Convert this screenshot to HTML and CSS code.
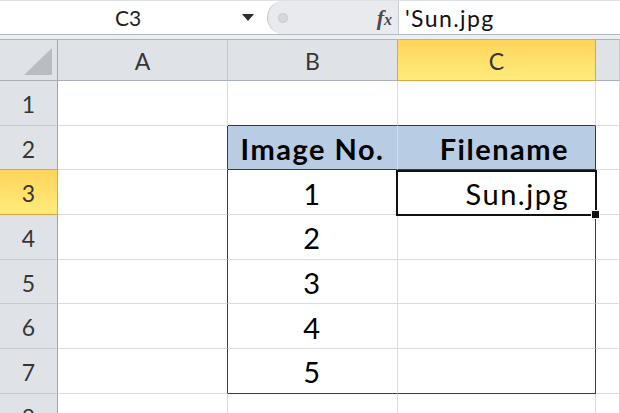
FILE: index.html
```html
<!doctype html>
<html>
<head>
<meta charset="utf-8">
<title>Sheet</title>
<link rel="stylesheet" href="styles.css">
</head>
<body>
<div class="fbar">
	<div class="namebox"><span class="ref">C3</span><span class="arrow"></span></div>
	<div class="fxzone"><span class="knob"></span><span class="fx">f<small>x</small></span></div>
	<div class="formula">'Sun.jpg</div>
</div>
<div class="gap"></div>
<div class="sheet">
	<div class="c hd corner"><svg width="30" height="29" viewBox="0 0 30 29"><polygon points="1,28 29,1 29,28" fill="#b8bdc3"/></svg></div>
	<div class="c hd">A</div>
	<div class="c hd selleft">B</div>
	<div class="c hd sel">C</div>
	<div class="c hd"></div>

	<div class="c rh">1</div>
	<div class="c"></div>
	<div class="c bb"></div>
	<div class="c bb"></div>
	<div class="c"></div>

	<div class="c rh seltop">2</div>
	<div class="c br"></div>
	<div class="c th bb">Image No.</div>
	<div class="c th bb br right">Filename</div>
	<div class="c"></div>

	<div class="c rh sel">3</div>
	<div class="c br"></div>
	<div class="c">1</div>
	<div class="c br right cur">Sun.jpg</div>
	<div class="c"></div>

	<div class="c rh">4</div>
	<div class="c br"></div>
	<div class="c">2</div>
	<div class="c br"></div>
	<div class="c"></div>

	<div class="c rh">5</div>
	<div class="c br"></div>
	<div class="c">3</div>
	<div class="c br"></div>
	<div class="c"></div>

	<div class="c rh">6</div>
	<div class="c br"></div>
	<div class="c">4</div>
	<div class="c br"></div>
	<div class="c"></div>

	<div class="c rh">7</div>
	<div class="c br"></div>
	<div class="c bb">5</div>
	<div class="c bb br"></div>
	<div class="c"></div>

	<div class="c rh">8</div>
	<div class="c"></div>
	<div class="c"></div>
	<div class="c"></div>
	<div class="c"></div>
</div>
</body>
</html>
```
FILE: styles.css
```css
*{ margin:0; padding:0; box-sizing:border-box;}
body{ width:620px; height:413px; overflow:hidden; background:#fff; font-family:Lato,"Open Sans",sans-serif;}

.fbar{ display:flex; height:35px; border-top:1px solid #dde0e4; border-bottom:1px solid #b4bac2; background:#fff;}
.namebox{ width:267px; display:flex; align-items:center;}
.namebox .ref{ flex:1; text-align:center; font-size:21px; color:#1e1e1e; padding-left:14px;}
.arrow{ width:0; height:0; border-left:6px solid transparent; border-right:6px solid transparent; border-top:7px solid #2d2d2d; margin-right:13px;}
.fxzone{ width:132px; background:#e8eaed; border-left:1px solid #bfc3c8; border-right:1px solid #c6c9cd; border-radius:18px 0 0 18px; display:flex; align-items:center; justify-content:space-between; padding:0 6px 0 10px;}
.knob{ width:10px; height:10px; border-radius:50%; background:#d6d8db; box-shadow:inset 0 0 2px #b9bcc0;}
.fx{ font-family:"Liberation Serif",serif; font-style:italic; font-weight:bold; font-size:22px; color:#4a4a4a;}
.fx small{ font-size:16px;}
.formula{ flex:1; display:flex; align-items:center; padding-left:6px; font-size:23px; letter-spacing:1.4px; color:#111;}
.gap{ height:4px; background:#eceef1;}

.sheet{ display:grid; grid-template-columns:58px 170px 170px 198px 24px; grid-template-rows:41px repeat(8,44.7px); border-top:1px solid #aeb4bb;}
.c{ border-right:1px solid #dadcdd; border-bottom:1px solid #dadcdd; display:flex; align-items:center; justify-content:center; font-size:29px; letter-spacing:1.5px; color:#000; padding-top:2px;}
.hd{ background:#dfe3e8; border-right-color:#c2c7cd; border-bottom-color:#a9afb7; font-size:23px; letter-spacing:0; color:#363636;}
.corner{ justify-content:flex-end; align-items:flex-end; padding:0 4px 4px 0; border-right-color:#9ea5ad;}
.rh{ background:#dfe3e8; border-right-color:#9ea5ad; border-bottom-color:#c6cbd1; font-size:23px; letter-spacing:0; color:#363636;}
.sel{ background:linear-gradient(#ffd45b,#ffec7c); border-right-color:#e2a43c; border-bottom-color:#e2a43c;}
.selleft{ border-right-color:#e2a43c;}
.seltop{ border-bottom-color:#e2a43c;}

.th{ background:#b8cce4; font-weight:bold;}
.right{ justify-content:flex-end; padding-right:26px;}
.bb{ border-bottom-color:#3c3c3c;}
.br{ border-right-color:#3c3c3c;}

.cur{ position:relative;}
.cur::after{ content:""; position:absolute; top:0; left:-2px; right:-2px; bottom:-2px; border:2px solid #111;}
.cur::before{ content:""; position:absolute; right:-5px; bottom:-5px; width:7px; height:7px; background:#111; border:1px solid #fff; z-index:2;}
```
